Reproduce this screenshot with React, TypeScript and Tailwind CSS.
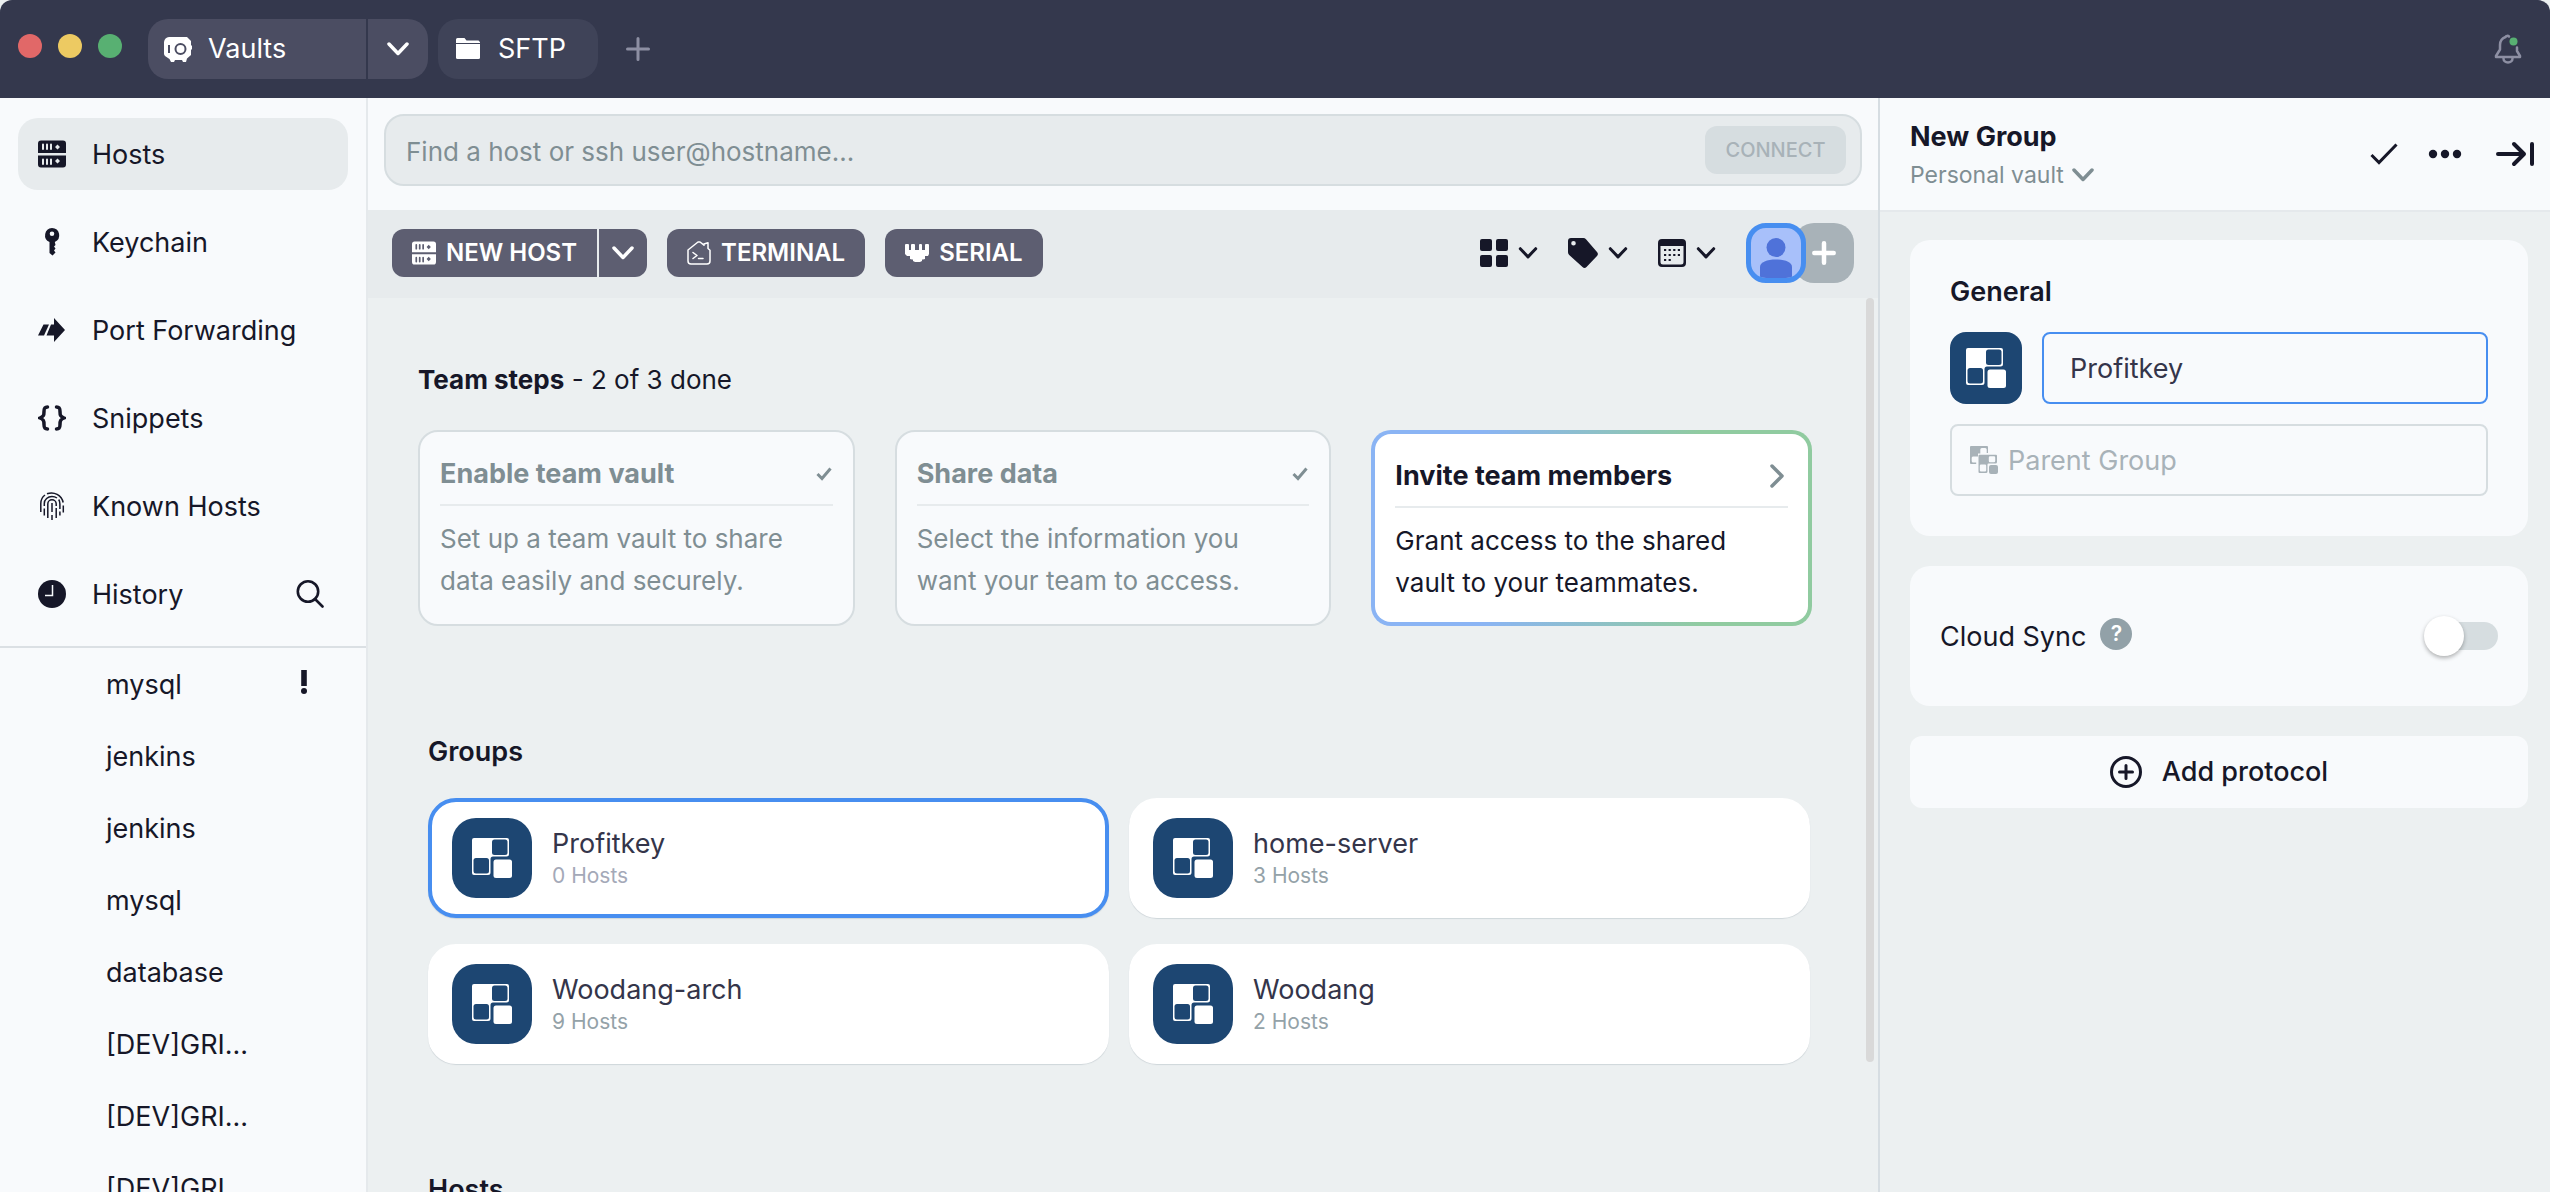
import { useState } from "react";

type IconProps = { className?: string };

// small shared icons
const ChevronDown = ({ className = "" }: IconProps) => (
    <svg viewBox="0 0 22 14" className={className} fill="none" stroke="currentColor" strokeWidth="3.500" strokeLinecap="round" strokeLinejoin="round" aria-hidden="true">
        <path d="M2 2l9 9.500L20 2" />
    </svg>
);

const CheckIcon = ({ className = "" }: IconProps) => (
    <svg viewBox="0 0 28 22" className={className} fill="none" stroke="currentColor" strokeWidth="3" aria-hidden="true">
        <path d="M1.500 12l7.500 7.500L26.500 1.500" />
    </svg>
);

// two stacked server boxes with slots and a light
const ServerIcon = ({ className = "" }: IconProps) => (
    <svg viewBox="0 0 28 28" className={className} fill="currentColor" aria-hidden="true">
        <path fillRule="evenodd" d="M3 0.500h22a3 3 0 0 1 3 3v9.500H0V3.500a3 3 0 0 1 3-3zM5 3.500a1 1 0 0 0-1 1v4.500a1 1 0 0 0 2 0V4.500a1 1 0 0 0-1-1zm4 0a1 1 0 0 0-1 1v4.500a1 1 0 0 0 2 0V4.500a1 1 0 0 0-1-1zm4 0a1 1 0 0 0-1 1v4.500a1 1 0 0 0 2 0V4.500a1 1 0 0 0-1-1zm6.500 1l-2.500 2.500 2.500 2.500 2.500-2.500z" />
        <path fillRule="evenodd" d="M0 15.500h28v9a3 3 0 0 1-3 3H3a3 3 0 0 1-3-3zM5 18.500a1 1 0 0 0-1 1V24a1 1 0 0 0 2 0v-4.500a1 1 0 0 0-1-1zm4 0a1 1 0 0 0-1 1V24a1 1 0 0 0 2 0v-4.500a1 1 0 0 0-1-1zm4 0a1 1 0 0 0-1 1V24a1 1 0 0 0 2 0v-4.500a1 1 0 0 0-1-1zm6.500 0L17 21l2.500 2.500L22 21z" />
    </svg>
);

const VaultIcon = () => (
    <svg viewBox="0 0 28 25" className="h-[25px] w-7 shrink-0" aria-hidden="true">
        <path fill="#fff" d="M5 0h18l4 4v4l1 1v3l-1 1v5l-4 3.500L22 25h-3l-1-2h-7l-1 2H7l-1.500-3L1 19a4 4 0 0 1-1-2V5a6 6 0 0 1 5-5z" />
        <path d="M5 8v8" stroke="#4b4d62" strokeWidth="2" />
        <circle cx="16.500" cy="12" r="5" fill="none" stroke="#4b4d62" strokeWidth="2" />
    </svg>
);

const FolderIcon = () => (
    <svg viewBox="0 0 24 22" className="h-[22px] w-6 shrink-0" fill="#fff" aria-hidden="true">
        <path d="M1.500 0h7l2 2.500h12L24 4v1H0V1.500A1.500 1.500 0 0 1 1.500 0z" />
        <path d="M0 6h24v13.500a1.500 1.500 0 0 1-1.500 1.500h-21A1.500 1.500 0 0 1 0 19.500z" />
    </svg>
);

const BellIcon = () => (
    <svg viewBox="0 0 28 30" className="h-[30px] w-7" fill="none" stroke="#8d8fa3" strokeWidth="2.500" strokeLinecap="round" strokeLinejoin="round" aria-hidden="true">
        <path d="M15 2.500c-1-1-3-.8-3.500.5C7.500 4.500 6 7.500 6 11v4.500L2 22v1h24v-1l-3-5v-3.500" />
        <path d="M9.500 24.500a4.500 4 0 0 0 9 0" />
        <circle cx="19.500" cy="7.500" r="4" fill="#58b072" stroke="none" />
    </svg>
);

const KeyIcon = () => (
    <svg viewBox="0 0 28 28" className="size-7" fill="currentColor" aria-hidden="true">
        <path fillRule="evenodd" d="M14 0a7.300 7.300 0 0 1 2.800 14l.7 3-1.500 1.500 1.500 2-1.500 2 1.500 2-3 3-3-2.500V14A7.300 7.300 0 0 1 14 0zm0 3.500a2.300 2.300 0 1 0 0 4.600 2.300 2.300 0 0 0 0-4.600z" />
    </svg>
);

const ForwardIcon = () => (
    <svg viewBox="0 0 28 28" className="size-7" fill="currentColor" aria-hidden="true">
        <path d="M5.500 8.500H11L6 19.500H0z" />
        <path d="M13 8.500h3V2l11 12-11 12v-6.500H8.500z" />
    </svg>
);

const BracesIcon = () => (
    <svg viewBox="0 0 28 28" className="size-7" fill="none" stroke="currentColor" strokeWidth="3.500" strokeLinecap="round" aria-hidden="true">
        <path d="M9.500 3C6 3 6 5 6 7.500c0 4-.5 5-4 6.500 3.500 1.500 4 2.500 4 6.500C6 23 6 25 9.500 25" />
        <path d="M18.500 3C22 3 22 5 22 7.500c0 4 .5 5 4 6.500-3.500 1.500-4 2.500-4 6.500 0 2.500 0 4.500-3.500 4.500" />
    </svg>
);

const FingerprintIcon = () => (
    <svg viewBox="0 0 28 28" className="size-7" fill="none" stroke="currentColor" strokeWidth="1.500" aria-hidden="true">
        <path d="M9 1.800a12 12 0 0 1 16.200 8.700M7 3C4.300 5 2.800 8 2.800 11.500V20M25.300 13.500v7" />
        <path d="M6.300 14V11.500c0-4 3.500-7 7.700-7 2 0 3.700.6 5 1.500M20.700 7.500c.8 1.200 1.200 2.500 1.200 4.500v5M21.900 19.500v4M6.300 16.500v7" />
        <path d="M9.800 26V12c0-2.500 1.900-4.200 4.200-4.200s4.200 1.700 4.200 4.200v2M18.200 16v10" />
        <path d="M14 11v9M14 23v5" />
    </svg>
);

const ClockIcon = () => (
    <svg viewBox="0 0 28 28" className="size-7" aria-hidden="true">
        <circle cx="14" cy="14" r="14" fill="currentColor" />
        <path d="M14.500 5v10.500H7" fill="none" stroke="#f8fafc" strokeWidth="1.500" />
    </svg>
);

const SearchIcon = () => (
    <svg viewBox="0 0 28 28" className="size-7" fill="none" stroke="currentColor" strokeWidth="2.600" strokeLinecap="round" aria-hidden="true">
        <circle cx="12" cy="11.500" r="10.200" />
        <path d="M19 19l7.500 7.500" />
    </svg>
);

const TerminalIcon = () => (
    <svg viewBox="0 0 24 24" className="size-6" fill="none" stroke="currentColor" strokeWidth="1.500" strokeLinejoin="round" strokeLinecap="round" aria-hidden="true">
        <path d="M1 9l10-8 2 0 4 3.200V3l4-1.300V7.500l2 1.700V20a3 3 0 0 1-3 3H4a3 3 0 0 1-3-3z" />
        <path d="M6 11.500l4 3-4 3M11.500 17.500H16" />
    </svg>
);

const SerialIcon = () => (
    <svg viewBox="0 0 24 18" className="h-[18px] w-6" fill="currentColor" aria-hidden="true">
        <path d="M0 1a1 1 0 0 1 1-1h2a1 1 0 0 1 1 1v5h2V1a1 1 0 0 1 1-1h2a1 1 0 0 1 1 1v5h4V1a1 1 0 0 1 1-1h1a1 1 0 0 1 1 1v5h3V1a1 1 0 0 1 1-1h2a1 1 0 0 1 1 1v9l-1 2h-3v3l-2 .500h-1V17l-2 1h-5l-2-1v-1.500H7L5 15v-3H2l-2-2z" />
    </svg>
);

const GridIcon = () => (
    <svg viewBox="0 0 28 28" className="size-7" fill="currentColor" aria-hidden="true">
        <rect width="12" height="12" rx="2" />
        <rect x="16" width="12" height="12" rx="2" />
        <rect y="16" width="12" height="12" rx="2" />
        <rect x="16" y="16" width="12" height="12" rx="2" />
    </svg>
);

const TagIcon = () => (
    <svg viewBox="0 0 30 30" className="size-[30px]" fill="currentColor" aria-hidden="true">
        <path fillRule="evenodd" d="M3 0h12a4 4 0 0 1 3 1.200L29 14a3 3 0 0 1 0 4L18.500 29a3 3 0 0 1-4 0L1.200 17A4 4 0 0 1 0 14V3a3 3 0 0 1 3-3zm2.500 3a2.300 2.300 0 1 0 0 4.600 2.300 2.300 0 0 0 0-4.600z" />
    </svg>
);

const CalendarIcon = () => (
    <svg viewBox="0 0 28 28" className="size-7" fill="currentColor" aria-hidden="true">
        <path fillRule="evenodd" d="M4 0h20a4 4 0 0 1 4 4v20a4 4 0 0 1-4 4H4a4 4 0 0 1-4-4V4a4 4 0 0 1 4-4zM2.500 7v16A2.500 2.500 0 0 0 5 25.500h18a2.500 2.500 0 0 0 2.500-2.500V7z" />
        <path d="M6 11h16M6 16h16M6 21h7" stroke="currentColor" strokeWidth="2.200" strokeDasharray="2.200 2.400" />
    </svg>
);

// the 2x2 tile glyph of a group
const TilesIcon = ({ className = "" }: IconProps) => (
    <svg viewBox="0 0 40 40" className={className} aria-hidden="true">
        <path fill="#fff" d="M2 0h33a2 2 0 0 1 2 2v14a2.500 2.500 0 0 1-2.500 2.500H21a2.500 2.500 0 0 0-2.500 2.500v13.500A2.500 2.500 0 0 1 16 37H2a2 2 0 0 1-2-2V2a2 2 0 0 1 2-2z" />
        <rect x="20" y="1.500" width="15.500" height="15.500" rx="2.500" fill="#1d4672" />
        <rect x="1.500" y="20" width="15.500" height="15.500" rx="2.500" fill="#1d4672" />
        <rect x="21.500" y="21.500" width="18.500" height="18.500" rx="2.500" fill="#fff" />
    </svg>
);

const ParentIcon = () => (
    <svg viewBox="0 0 28 28" className="size-7 shrink-0" fill="#a8b2b8" aria-hidden="true">
        <path fillRule="evenodd" d="M1 0h16a1 1 0 0 1 1 1v6h-1.300V3.500a1.500 1.500 0 0 0-1.500-1.500h-3.400a1.500 1.500 0 0 0-1.500 1.500V7.500H8v3H3.500A1.500 1.500 0 0 0 1.700 12v3a1.500 1.500 0 0 0 1.500 1.500h3V18H1a1 1 0 0 1-1-1V1a1 1 0 0 1 1-1z" />
        <path fillRule="evenodd" d="M9.500 8.700H26a1 1 0 0 1 1 1V16a1.500 1.500 0 0 1-1.500 1.500H18.500a1 1 0 0 0-1 1V25.500A1.500 1.500 0 0 1 16 27H9.500a1 1 0 0 1-1-1V9.700a1 1 0 0 1 1-1zM20 10.200A1.200 1.200 0 0 0 18.800 11.400v3.600A1.200 1.200 0 0 0 20 16.200h4a1.200 1.200 0 0 0 1.200-1.200v-3.600A1.200 1.200 0 0 0 24 10.200zM11 18.500a1.200 1.200 0 0 0-1.200 1.200v4.600A1.200 1.200 0 0 0 11 25.500h4a1.200 1.200 0 0 0 1.200-1.200v-4.600A1.200 1.200 0 0 0 15 18.500z" />
        <rect x="19" y="19" width="9" height="9" rx="2" />
    </svg>
);

const navItems = [
    { label: "Hosts", icon: <ServerIcon className="size-7" /> },
    { label: "Keychain", icon: <KeyIcon /> },
    { label: "Port Forwarding", icon: <ForwardIcon /> },
    { label: "Snippets", icon: <BracesIcon /> },
    { label: "Known Hosts", icon: <FingerprintIcon /> },
    { label: "History", icon: <ClockIcon /> },
];

const historyItems = ["mysql", "jenkins", "jenkins", "mysql", "database", "[DEV]GRI...", "[DEV]GRI...", "[DEV]GRI..."];

const steps = [
    { title: "Enable team vault", lines: ["Set up a team vault to share", "data easily and securely."], done: true },
    { title: "Share data", lines: ["Select the information you", "want your team to access."], done: true },
    { title: "Invite team members", lines: ["Grant access to the shared", "vault to your teammates."], done: false },
];

const groups = [
    { name: "Profitkey", hosts: 0 },
    { name: "home-server", hosts: 3 },
    { name: "Woodang-arch", hosts: 9 },
    { name: "Woodang", hosts: 2 },
];

function TitleBar() {
    return (
        <header className="flex h-[98px] shrink-0 items-center rounded-t-[12px] bg-[#34384d] pr-7 pl-[18px] text-white">
            <div className="mb-[6px] flex gap-4">
                <button aria-label="Close" className="size-6 rounded-full bg-[#e16868]" />
                <button aria-label="Minimize" className="size-6 rounded-full bg-[#edca62]" />
                <button aria-label="Zoom" className="size-6 rounded-full bg-[#58b072]" />
            </div>
            <div className="ml-[26px] flex h-[60px] gap-[2px]">
                <button className="flex w-[218px] items-center gap-4 rounded-l-[20px] bg-[#4b4d62] pl-4">
                    <VaultIcon />
                    Vaults
                </button>
                <button aria-label="Choose vault" className="flex w-[60px] items-center justify-center rounded-r-[20px] bg-[#4b4d62]">
                    <ChevronDown className="h-[14px] w-[22px]" />
                </button>
            </div>
            <button className="ml-[10px] flex h-[60px] w-[160px] items-center gap-[18px] rounded-[20px] bg-[#3f4358] pl-[18px]">
                <FolderIcon />
                SFTP
            </button>
            <button aria-label="New tab" className="ml-7 text-[#8d8fa3]">
                <svg viewBox="0 0 24 24" className="size-6" stroke="currentColor" strokeWidth="3" strokeLinecap="round" aria-hidden="true">
                    <path d="M12 1.500v21M1.500 12h21" />
                </svg>
            </button>
            <button aria-label="Notifications" className="ml-auto">
                <BellIcon />
            </button>
        </header>
    );
}

function Sidebar() {
    return (
        <aside className="flex w-[368px] shrink-0 flex-col overflow-hidden border-r-2 border-[#e5e9ec] bg-[#f8fafc]">
            <nav className="flex flex-col gap-4 border-b-2 border-[#dbe0e4] px-[18px] pt-5 pb-4">
                {navItems.map((item) => (
                    <div
                        key={item.label}
                        className={`flex h-[72px] shrink-0 items-center rounded-[20px] pr-6 pl-5 ${item.label === "Hosts" ? "bg-[#e7ebed]" : ""}`}
                    >
                        <button className="flex flex-1 items-center gap-[26px] text-left">
                            {item.icon}
                            <span className="pt-[2px]">{item.label}</span>
                        </button>
                        {item.label === "History" && (
                            <button aria-label="Search history">
                                <SearchIcon />
                            </button>
                        )}
                    </div>
                ))}
            </nav>
            <ul>
                {historyItems.map((name, i) => (
                    <li key={i}>
                        <button className="flex h-[72px] w-full items-center justify-between pr-[58px] pl-[106px]">
                            <span className="pt-[2px]">{name}</span>
                            {i === 0 && (
                                <svg viewBox="0 0 8 24" className="mb-1 h-6 w-2" fill="currentColor" aria-label="Connection failed">
                                    <path d="M1.200 0h5.600v16H1.200z" />
                                    <circle cx="4" cy="21" r="3" />
                                </svg>
                            )}
                        </button>
                    </li>
                ))}
            </ul>
        </aside>
    );
}

function Toolbar() {
    return (
        <div className="flex h-[88px] shrink-0 items-center justify-between bg-[#e7ebed] px-6 pb-[2px] text-[#161728]">
            <div className="flex h-12 text-[24px] font-semibold text-white">
                <button className="flex items-center gap-[10px] rounded-l-[12px] bg-[#5d5e71] px-5">
                    <ServerIcon className="size-6" />
                    NEW HOST
                </button>
                <button aria-label="More host types" className="ml-[2px] flex w-12 items-center justify-center rounded-r-[12px] bg-[#5d5e71]">
                    <ChevronDown className="h-[14px] w-[22px]" />
                </button>
                <button className="ml-5 flex items-center gap-[10px] rounded-[12px] bg-[#5d5e71] px-5">
                    <TerminalIcon />
                    TERMINAL
                </button>
                <button className="ml-5 flex items-center gap-[10px] rounded-[12px] bg-[#5d5e71] px-5">
                    <SerialIcon />
                    SERIAL
                </button>
            </div>
            <div className="flex items-center gap-[30px]">
                <button aria-label="View" className="flex items-center gap-[10px]">
                    <GridIcon />
                    <ChevronDown className="h-3 w-5" />
                </button>
                <button aria-label="Tags" className="flex items-center gap-[10px]">
                    <TagIcon />
                    <ChevronDown className="h-3 w-5" />
                </button>
                <button aria-label="Sort" className="flex items-center gap-[10px]">
                    <CalendarIcon />
                    <ChevronDown className="h-3 w-5" />
                </button>
                <div className="flex">
                    <button aria-label="Account" className="z-10 size-[60px] overflow-hidden rounded-[20px] border-[5px] border-[#478ef0] bg-[#a8c0fa]">
                        <svg viewBox="0 0 50 50" className="size-full" fill="#4f72d9" aria-hidden="true">
                            <circle cx="25" cy="19.500" r="9.500" />
                            <path d="M9 50V39c0-5 7-7.500 16-7.500S41 34 41 39v11z" />
                        </svg>
                    </button>
                    <button aria-label="Invite" className="-ml-3 flex h-[60px] w-[60px] items-center justify-end rounded-[20px] bg-[#a8b2b8] pr-[18px] text-white">
                        <svg viewBox="0 0 24 24" className="size-6" stroke="currentColor" strokeWidth="4.500" strokeLinecap="round" aria-hidden="true">
                            <path d="M12 2.300v19.400M2.300 12h19.400" />
                        </svg>
                    </button>
                </div>
            </div>
        </div>
    );
}

function TeamSteps() {
    return (
        <section className="pr-[54px] pl-[50px]">
            <h2 className="text-[26px] leading-10">
                <span className="font-bold">Team steps</span> - 2 of 3 done
            </h2>
            <div className="mt-[30px] flex gap-10">
                {steps.map((step) => (
                    <article
                        key={step.title}
                        className={
                            step.done
                                ? "flex-1 rounded-[20px] border-2 border-[#d6dde0] bg-[#f8fafc] px-5 pt-3 pb-[22px] text-[#7f8e93]"
                                : "flex-1 rounded-[20px] border-4 border-transparent bg-[linear-gradient(#fff,#fff),linear-gradient(90deg,#8ab4f4_25%,#90cba0_75%)] [background-clip:padding-box,border-box] bg-origin-border px-5 pt-3 pb-[18px]"
                        }
                    >
                        <div className="flex h-[62px] items-center justify-between border-b-2 border-[#e7ebed]">
                            <h3 className="font-bold">{step.title}</h3>
                            {step.done ? (
                                <svg viewBox="0 0 16 14" className="mr-px h-[14px] w-4" fill="none" stroke="currentColor" strokeWidth="3" aria-label="Done">
                                    <path d="M1.500 7l4.500 4.500 8.500-10" />
                                </svg>
                            ) : (
                                <svg viewBox="0 0 14 24" className="mr-1 h-6 w-[14px]" fill="none" stroke="#7f8e93" strokeWidth="3.500" strokeLinecap="round" strokeLinejoin="round" aria-hidden="true">
                                    <path d="M2 2l10 10L2 22" />
                                </svg>
                            )}
                        </div>
                        <p className="pt-3 text-[26px] leading-[42px]">
                            {step.lines[0]}
                            <br />
                            {step.lines[1]}
                        </p>
                    </article>
                ))}
            </div>
        </section>
    );
}

function Groups({ selected, onSelect }: { selected: string; onSelect: (name: string) => void }) {
    return (
        <section className="mt-[106px] pr-14 pl-[60px]">
            <h2 className="leading-10 font-semibold">Groups</h2>
            <div className="mt-[26px] grid grid-cols-2 gap-x-5 gap-y-[26px]">
                {groups.map((group) => {
                    const active = group.name === selected;
                    return (
                        <button
                            key={group.name}
                            onClick={() => onSelect(group.name)}
                            className={`flex h-[120px] items-center gap-5 rounded-[28px] border-4 bg-white px-5 text-left shadow-[0_1px_1px_#cfd6da] ${active ? "border-[#478ef0]" : "border-white"}`}
                        >
                            <span className="flex size-20 items-center justify-center rounded-[24px] bg-[#1d4672]">
                                <TilesIcon className="size-10" />
                            </span>
                            <span>
                                <span className="block leading-9 text-[#34354a]">{group.name}</span>
                                <span className={`block text-[21px] leading-7 ${active ? "text-[#a4a9b8]" : "text-[#94a2a8]"}`}>{group.hosts} Hosts</span>
                            </span>
                        </button>
                    );
                })}
            </div>
        </section>
    );
}

function GroupPanel() {
    const [name, setName] = useState("Profitkey");
    const [sync, setSync] = useState(false);

    return (
        <aside className="flex w-[672px] shrink-0 flex-col border-l-2 border-[#d6dde2]">
            <div className="flex h-[114px] shrink-0 items-center justify-between border-b-2 border-[#e5e9ec] bg-[#f8fafc] pr-4 pl-[30px]">
                <div className="pt-[2px]">
                    <h2 className="leading-10 font-bold">New Group</h2>
                    <button className="flex items-center gap-2 text-[23px] leading-9 text-[#7f8e93]">
                        Personal vault
                        <ChevronDown className="h-[14px] w-[22px]" />
                    </button>
                </div>
                <div className="flex items-center">
                    <button aria-label="Save">
                        <CheckIcon className="h-[22px] w-7" />
                    </button>
                    <button aria-label="More" className="ml-[30px]">
                        <svg viewBox="0 0 34 10" className="h-[10px] w-[34px]" fill="currentColor" aria-hidden="true">
                            <circle cx="5" cy="5" r="4.200" />
                            <circle cx="17" cy="5" r="4.200" />
                            <circle cx="29" cy="5" r="4.200" />
                        </svg>
                    </button>
                    <button aria-label="Hide panel" className="ml-[34px]">
                        <svg viewBox="0 0 38 26" className="h-[26px] w-[38px]" fill="none" stroke="currentColor" strokeWidth="4" strokeLinecap="round" strokeLinejoin="round" aria-hidden="true">
                            <path d="M2 13h25M18 3l10 10-10 10M36 3v20" />
                        </svg>
                    </button>
                </div>
            </div>
            <div className="flex flex-col py-7 pr-[22px] pl-[30px]">
                <div className="rounded-[20px] bg-[#f8fafc] px-10 pt-8 pb-10">
                    <h3 className="leading-10 font-semibold">General</h3>
                    <div className="mt-5 flex gap-5">
                        <button aria-label="Group icon" className="flex size-[72px] shrink-0 items-center justify-center rounded-[16px] bg-[#1d4672]">
                            <TilesIcon className="size-10" />
                        </button>
                        <input
                            aria-label="Group name"
                            value={name}
                            onChange={(e) => setName(e.target.value)}
                            className="h-[72px] min-w-0 flex-1 rounded-[8px] border-2 border-[#478ef0] bg-transparent px-[26px] text-[#34354a] outline-none"
                        />
                    </div>
                    <label className="mt-5 flex h-[72px] items-center gap-[10px] rounded-[8px] border-2 border-[#d6dde0] px-[18px]">
                        <ParentIcon />
                        <input aria-label="Parent Group" placeholder="Parent Group" className="min-w-0 flex-1 bg-transparent pt-[2px] outline-none placeholder:text-[#a8b2b8]" />
                    </label>
                </div>
                <div className="mt-[30px] flex h-[140px] items-center rounded-[20px] bg-[#f8fafc] px-[30px]">
                    <label htmlFor="cloud-sync" className="pt-[2px]">
                        Cloud Sync
                    </label>
                    <button aria-label="About Cloud Sync" className="mb-1 ml-[14px] size-8 rounded-full bg-[#92a1a8] text-[21px] leading-8 font-semibold text-white">
                        ?
                    </button>
                    <input
                        id="cloud-sync"
                        type="checkbox"
                        role="switch"
                        checked={sync}
                        onChange={(e) => setSync(e.target.checked)}
                        className="ml-auto flex h-7 w-[72px] appearance-none items-center rounded-full bg-[#d6dde0] before:-ml-[2px] before:size-10 before:shrink-0 before:rounded-full before:bg-white before:shadow-[0_2px_4px_rgba(0,0,0,0.3)] checked:justify-end checked:bg-[#478ef0]"
                    />
                </div>
                <button className="mt-[30px] flex h-[72px] items-center justify-center gap-5 rounded-[12px] bg-[#f8fafc] font-medium">
                    <svg viewBox="0 0 32 32" className="size-8" fill="none" stroke="currentColor" strokeWidth="3" strokeLinecap="round" aria-hidden="true">
                        <circle cx="16" cy="16" r="14.500" />
                        <path d="M16 9.500v13M9.500 16h13" />
                    </svg>
                    Add protocol
                </button>
            </div>
        </aside>
    );
}

export default function App() {
    const [selected, setSelected] = useState("Profitkey");

    return (
        <div className="flex h-screen flex-col overflow-hidden bg-[#ecf0f1] font-['Inter','Liberation_Sans',sans-serif] text-[27px] text-[#161728]">
            <TitleBar />
            <div className="flex min-h-0 flex-1">
                <Sidebar />
                <main className="flex min-w-0 flex-1 flex-col">
                    <div className="h-28 shrink-0 bg-[#f8fafc] p-4">
                        <div className="flex h-[72px] items-center rounded-[20px] border-2 border-[#d6dde0] bg-[#e7ebed] pr-[14px] pl-5">
                            <input aria-label="Find a host" placeholder="Find a host or ssh user@hostname..." className="min-w-0 flex-1 bg-transparent pt-[2px] text-[26px] outline-none placeholder:text-[#7f8e93]" />
                            <button className="h-12 w-[141px] rounded-[12px] bg-[#d6dde0] text-[20px] font-medium text-[#a8b2b8]">CONNECT</button>
                        </div>
                    </div>
                    <Toolbar />
                    <div className="flex min-h-0 flex-1 pr-1">
                        <div className="min-w-0 flex-1 overflow-hidden pt-[62px]">
                            <TeamSteps />
                            <Groups selected={selected} onSelect={setSelected} />
                            <h2 className="mt-[106px] pl-[60px] leading-10 font-semibold">Hosts</h2>
                        </div>
                        {/* scroll thumb */}
                        <div className="h-[764px] w-2 shrink-0 rounded-full bg-[#d9d9d9]" />
                    </div>
                </main>
                <GroupPanel />
            </div>
        </div>
    );
}
